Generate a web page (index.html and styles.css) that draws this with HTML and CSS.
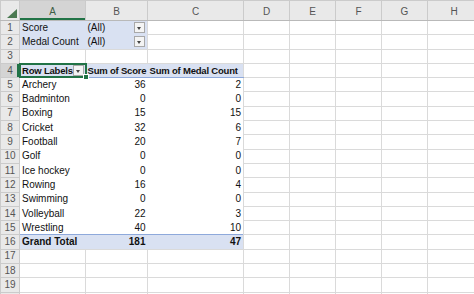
FILE: index.html
```html
<!DOCTYPE html>
<html lang="en">
<head>
  <meta charset="UTF-8">
  <title>Pivot Table</title>
  <link rel="stylesheet" href="styles.css">
</head>
<body>
  <table class="sheet">
    <colgroup>
      <col class="w-rh"><col class="w-a"><col class="w-b"><col class="w-c">
      <col class="w-x"><col class="w-x"><col class="w-x"><col class="w-x"><col class="w-h">
    </colgroup>
    <thead>
      <tr class="hdr">
        <th class="corner"><svg width="10" height="9" viewBox="0 0 10 9"><polygon points="0,9 10,9 10,0" fill="#4b7a52"/></svg></th>
        <th class="sel-col">A</th><th>B</th><th>C</th><th>D</th><th>E</th><th>F</th><th>G</th><th>H</th>
      </tr>
    </thead>
    <tbody>
      <tr><th>1</th>
        <td class="flt">Score</td>
        <td class="flt"><div class="cell-flex"><span>(All)</span><span class="dd"></span></div></td>
        <td></td><td></td><td></td><td></td><td></td><td></td></tr>
      <tr><th>2</th>
        <td class="flt">Medal Count</td>
        <td class="flt"><div class="cell-flex"><span>(All)</span><span class="dd"></span></div></td>
        <td></td><td></td><td></td><td></td><td></td><td></td></tr>
      <tr><th>3</th><td></td><td></td><td></td><td></td><td></td><td></td><td></td><td></td></tr>
      <tr><th class="sel-row">4</th>
        <td class="ph active"><div class="cell-flex"><span>Row Labels</span><span class="dd"></span></div></td>
        <td class="ph">Sum of Score</td>
        <td class="ph">Sum of Medal Count</td>
        <td></td><td></td><td></td><td></td><td></td></tr>
      <tr><th>5</th><td class="pv">Archery</td><td class="pv num">36</td><td class="pv num">2</td><td></td><td></td><td></td><td></td><td></td></tr>
      <tr><th>6</th><td class="pv">Badminton</td><td class="pv num">0</td><td class="pv num">0</td><td></td><td></td><td></td><td></td><td></td></tr>
      <tr><th>7</th><td class="pv">Boxing</td><td class="pv num">15</td><td class="pv num">15</td><td></td><td></td><td></td><td></td><td></td></tr>
      <tr><th>8</th><td class="pv">Cricket</td><td class="pv num">32</td><td class="pv num">6</td><td></td><td></td><td></td><td></td><td></td></tr>
      <tr><th>9</th><td class="pv">Football</td><td class="pv num">20</td><td class="pv num">7</td><td></td><td></td><td></td><td></td><td></td></tr>
      <tr><th>10</th><td class="pv">Golf</td><td class="pv num">0</td><td class="pv num">0</td><td></td><td></td><td></td><td></td><td></td></tr>
      <tr><th>11</th><td class="pv">Ice hockey</td><td class="pv num">0</td><td class="pv num">0</td><td></td><td></td><td></td><td></td><td></td></tr>
      <tr><th>12</th><td class="pv">Rowing</td><td class="pv num">16</td><td class="pv num">4</td><td></td><td></td><td></td><td></td><td></td></tr>
      <tr><th>13</th><td class="pv">Swimming</td><td class="pv num">0</td><td class="pv num">0</td><td></td><td></td><td></td><td></td><td></td></tr>
      <tr><th>14</th><td class="pv">Volleyball</td><td class="pv num">22</td><td class="pv num">3</td><td></td><td></td><td></td><td></td><td></td></tr>
      <tr><th>15</th><td class="pv">Wrestling</td><td class="pv num">40</td><td class="pv num">10</td><td></td><td></td><td></td><td></td><td></td></tr>
      <tr><th>16</th><td class="gt">Grand Total</td><td class="gt num">181</td><td class="gt num">47</td><td></td><td></td><td></td><td></td><td></td></tr>
      <tr><th>17</th><td></td><td></td><td></td><td></td><td></td><td></td><td></td><td></td></tr>
      <tr><th>18</th><td></td><td></td><td></td><td></td><td></td><td></td><td></td><td></td></tr>
      <tr><th>19</th><td></td><td></td><td></td><td></td><td></td><td></td><td></td><td></td></tr>
      <tr><th></th><td></td><td></td><td></td><td></td><td></td><td></td><td></td><td></td></tr>
    </tbody>
  </table>
</body>
</html>
```
FILE: styles.css
```css
body {
  margin: 0;
  background: #fff;
  overflow: hidden;
  font-family: 'Liberation Sans', Arial, sans-serif;
}
.sheet {
  border-collapse: collapse;
  table-layout: fixed;
  width: 480px;
  font-size: 10px;
  color: #111;
}
.w-rh { width: 19px; }
.w-a { width: 66px; }
.w-b { width: 62px; }
.w-c { width: 96px; }
.w-x { width: 46px; }
.w-h { width: 53px; }

.sheet tr { height: 14.3px; }
.sheet tr.hdr { height: 20px; }

.sheet td,
.sheet th {
  padding: 0 2px;
  border: 1px solid #dadada;
  white-space: nowrap;
  overflow: hidden;
  line-height: 12px;
  text-align: left;
  font-weight: normal;
}
.sheet th {
  background: #e9e9e9;
  color: #555;
  text-align: center;
  border-color: #cbcbcb;
  padding: 0;
}
.hdr th {
  border-bottom-color: #b9b9b9;
  padding-top: 2px;
}
.corner {
  text-align: right !important;
  vertical-align: bottom;
}
.corner svg { display: block; margin: 0 2px 2px auto; }
.sel-col {
  background: #d4d4d4 !important;
  color: #3d5c45 !important;
  box-shadow: inset 0 -2px 0 #217346;
}
.sel-row {
  background: #d4d4d4 !important;
  box-shadow: inset -2px 0 0 #217346;
}

/* pivot filter area */
.flt {
  background: #d9e1f2;
  border-style: none !important;
}
.cell-flex {
  display: flex;
  align-items: center;
}
.dd {
  margin-left: auto;
  width: 9px;
  height: 9px;
  border: 1px solid #a8a8a8;
  background: #f4f4f4;
  position: relative;
  flex: none;
}
.dd::after {
  content: "";
  position: absolute;
  left: 2px;
  top: 4px;
  border-left: 2.5px solid transparent;
  border-right: 2.5px solid transparent;
  border-top: 3px solid #444;
}

/* pivot body */
.ph {
  background: #d9e1f2;
  font-weight: bold !important;
  font-size: 9.5px;
  letter-spacing: -0.2px;
  border-style: none !important;
  border-bottom: 1px solid #8ea9db !important;
}
.pv {
  background: #fff;
  border-style: none !important;
}
.gt {
  background: #d9e1f2;
  font-weight: bold !important;
  border-style: none !important;
  border-top: 1px solid #8ea9db !important;
}
.num { text-align: right !important; }

.active { position: relative; overflow: visible !important; }
.active::after {
  content: "";
  position: absolute;
  inset: -1px -1px -1px -1px;
  border: 2px solid #217346;
  pointer-events: none;
}
.active::before {
  content: "";
  position: absolute;
  right: -3px;
  bottom: -3px;
  width: 4px;
  height: 4px;
  background: #217346;
  border: 1px solid #fff;
  z-index: 2;
}
```
